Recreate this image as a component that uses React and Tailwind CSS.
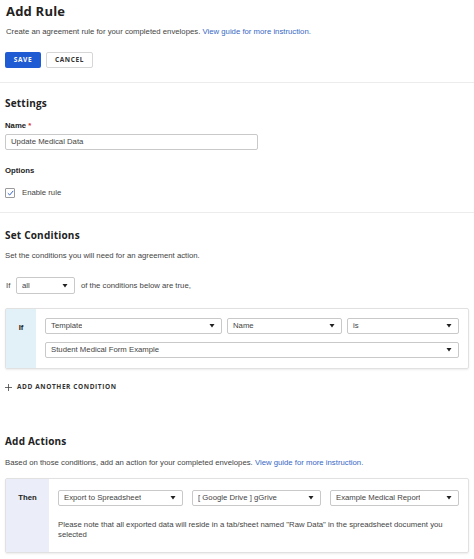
import React from 'react';

const Caret = () => (
    <svg width="6" height="4" viewBox="0 0 6 4" className="shrink-0">
        <path d="M0.5 0 L5.5 0 L3 3.5 Z" fill="#222" />
    </svg>
);

const Select = ({ value, className = '' }) => (
    <div className={`h-[16px] flex items-center justify-between border border-[#c9c9c9] rounded-[2px] bg-white pl-[5px] pr-[6px] ${className}`}>
        <span className="text-[7.75px] text-[#444] truncate">{value}</span>
        <Caret />
    </div>
);

const Heading = ({ children, className = '' }) => (
    <h2 className={`text-[10px] leading-[14px] font-bold text-[#222] tracking-[0.2px] ${className}`} style={{ fontFamily: '"Open Sans", sans-serif' }}>
        {children}
    </h2>
);

const App = () => {
    return (
        <div className="w-[474px] h-[559px] overflow-hidden bg-white px-[5px] text-[#444]" style={{ fontFamily: '"Liberation Sans", Arial, sans-serif' }}>
            {/* Header */}
            <h1 className="h-[22px] leading-[22px] text-[13px] font-bold text-[#222] pl-[1px] tracking-[0.2px]" style={{ fontFamily: '"Open Sans", sans-serif' }}>
                Add Rule
            </h1>
            <p className="mt-[4px] leading-[12px] text-[7.75px] pl-[1px]">
                Create an agreement rule for your completed envelopes. <span className="text-[#3767c4]">View guide for more instruction.</span>
            </p>
            <div className="mt-[14px] flex gap-[5px]" style={{ fontFamily: '"Open Sans", sans-serif' }}>
                <button className="h-[16px] w-[36px] bg-[#1f5bd3] rounded-[2px] text-white text-[6.5px] font-bold tracking-[0.6px]">SAVE</button>
                <button className="h-[16px] w-[47px] bg-white border border-[#d6d6d6] rounded-[2px] text-[#333] text-[6.5px] font-bold tracking-[0.6px]">CANCEL</button>
            </div>
            <div className="mt-[14px] -mx-[5px] border-t border-[#ececec]" />

            {/* Settings */}
            <Heading className="mt-[13px]">Settings</Heading>
            <div className="mt-[10px] leading-[12px] text-[7.75px] font-bold text-[#222]">
                Name <span className="text-[#d3382f]">*</span>
            </div>
            <div className="mt-[2px] h-[16px] w-[253px] border border-[#c9c9c9] rounded-[2px] flex items-center pl-[5px] text-[7.75px] text-[#444]">
                Update Medical Data
            </div>
            <div className="mt-[15px] leading-[12px] text-[7.75px] font-bold text-[#222]">Options</div>
            <div className="mt-[10px] h-[12px] flex items-center gap-[7px]">
                <div className="w-[10px] h-[10px] border border-[#9a9a9a] rounded-[1px] flex items-center justify-center">
                    <svg width="7" height="6" viewBox="0 0 7 6">
                        <path d="M0.8 3.2 L2.7 5 L6.2 0.9" fill="none" stroke="#2f63c9" strokeWidth="1" />
                    </svg>
                </div>
                <span className="text-[7.75px] text-[#444]">Enable rule</span>
            </div>
            <div className="mt-[13px] -mx-[5px] border-t border-[#ececec]" />

            {/* Conditions */}
            <Heading className="mt-[15px]">Set Conditions</Heading>
            <p className="mt-[8px] leading-[12px] text-[7.75px]">Set the conditions you will need for an agreement action.</p>
            <div className="mt-[15px] flex items-center text-[7.75px]">
                <span className="w-[11px] pl-[1px]">If</span>
                <Select value="all" className="w-[59px] h-[17px]" />
                <span className="ml-[6px]">of the conditions below are true,</span>
            </div>
            <div className="mt-[14px] h-[61px] flex border border-[#e1e1e1] rounded-[2px] shadow-[0_1px_2px_rgba(0,0,0,0.08)]">
                <div className="w-[30px] bg-[#e2f0f7] pt-[13px] text-center text-[7.75px] font-bold text-[#222]">If</div>
                <div className="flex-1 pl-[9px] pr-[9px] pt-[9px] flex flex-col gap-[8px]">
                    <div className="flex gap-[5px]">
                        <Select value="Template" className="w-[177px]" />
                        <Select value="Name" className="w-[115px]" />
                        <Select value="is" className="flex-1" />
                    </div>
                    <Select value="Student Medical Form Example" />
                </div>
            </div>
            <div className="mt-[12px] h-[12px] flex items-center gap-[5px] text-[#333]" style={{ fontFamily: '"Open Sans", sans-serif' }}>
                <svg width="7" height="7" viewBox="0 0 7 7">
                    <path d="M3.5 0 V7 M0 3.5 H7" stroke="#444" strokeWidth="0.8" />
                </svg>
                <span className="text-[6.5px] font-bold tracking-[0.6px]">ADD ANOTHER CONDITION</span>
            </div>

            {/* Actions */}
            <Heading className="mt-[41px]">Add Actions</Heading>
            <p className="mt-[9px] leading-[12px] text-[7.75px]">
                Based on those conditions, add an action for your completed envelopes. <span className="text-[#3767c4]">View guide for more instruction.</span>
            </p>
            <div className="mt-[9px] h-[75px] flex border border-[#e1e1e1] rounded-[2px] shadow-[0_1px_2px_rgba(0,0,0,0.08)]">
                <div className="w-[43px] bg-[#ebeef8] pt-[13px] text-center text-[7.75px] font-bold text-[#222]">Then</div>
                <div className="flex-1 pl-[9px] pr-[9px] pt-[11px]">
                    <div className="flex gap-[9px]">
                        <Select value="Export to Spreadsheet" className="w-[125px]" />
                        <Select value="[ Google Drive ] gGrive" className="w-[129px]" />
                        <Select value="Example Medical Report" className="flex-1" />
                    </div>
                    <p className="mt-[14px] text-[7.75px] leading-[10px] text-[#444]">
                        Please note that all exported data will reside in a tab/sheet named "Raw Data" in the spreadsheet document you selected
                    </p>
                </div>
            </div>
        </div>
    );
};

export default App;
